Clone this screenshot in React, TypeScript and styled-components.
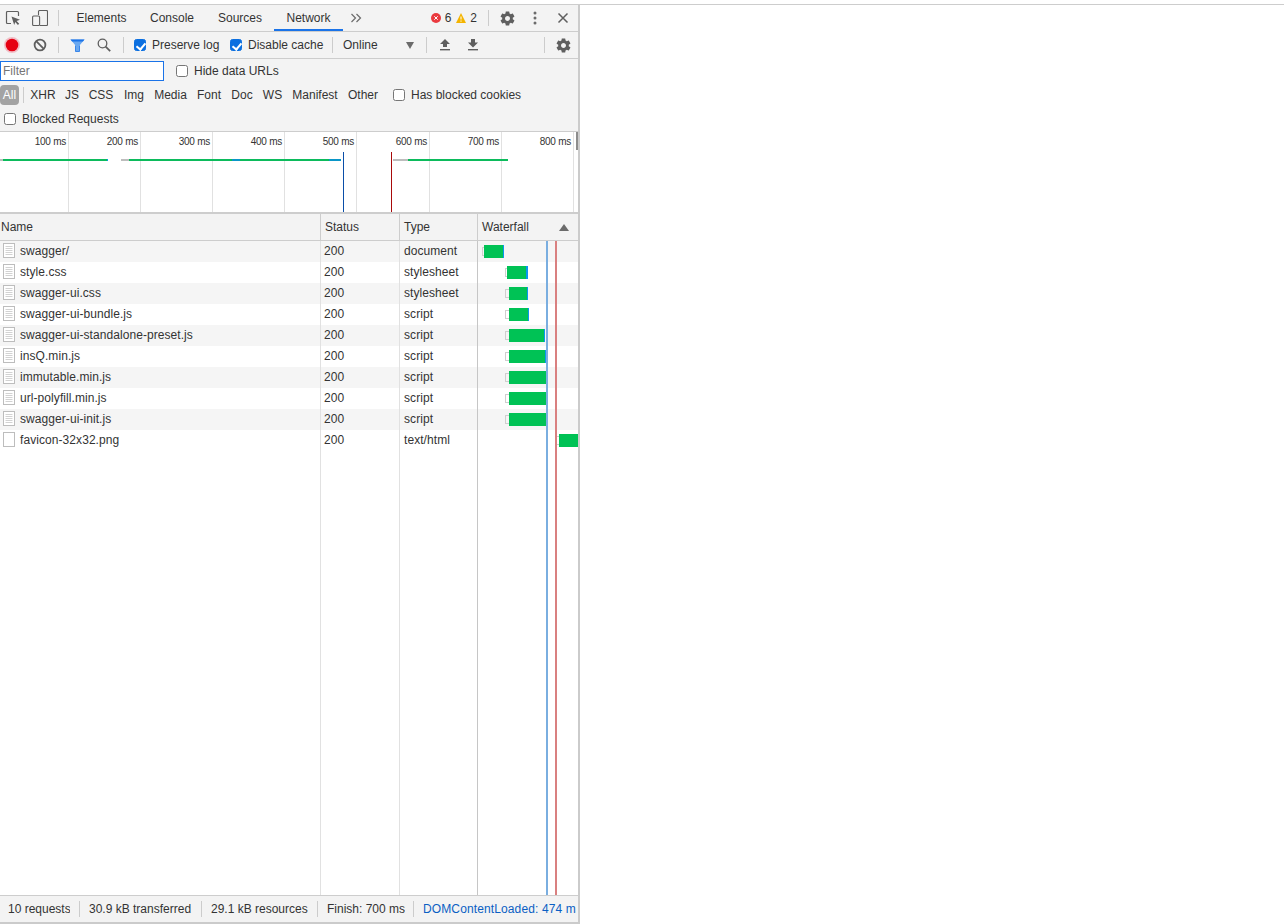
import React from 'react';
import styled, { createGlobalStyle } from 'styled-components';

const GlobalStyle = createGlobalStyle`
  html, body {
    margin: 0;
    padding: 0;
    background: #fff;
  }
  * {
    box-sizing: border-box;
  }
`;

const TopGap = styled.div`
  height: 5px;
  border-bottom: 1px solid #cdcdcd;
`;

const Panel = styled.div`
  width: 580px;
  height: 919px;
  display: flex;
  flex-direction: column;
  border-right: 2px solid #cbcbcb;
  font: 12px 'Liberation Sans', Arial, sans-serif;
  color: #333;
  overflow: hidden;
`;

const Bar = styled.div`
  height: 27px;
  flex: none;
  display: flex;
  align-items: center;
  background: #f3f3f3;
  border-bottom: 1px solid #cdcdcd;
`;

const Slot = styled.div<{ $w: number; $ml?: number }>`
  width: ${(p) => p.$w}px;
  margin-left: ${(p) => p.$ml ?? 0}px;
  height: 100%;
  flex: none;
  display: flex;
  align-items: center;
  justify-content: center;
`;

const Sep = styled.div<{ $ml: number; $mr: number }>`
  width: 1px;
  height: 16px;
  flex: none;
  background: #ccc;
  margin-left: ${(p) => p.$ml}px;
  margin-right: ${(p) => p.$mr}px;
`;

const Tab = styled.div<{ $w: number; $active?: boolean }>`
  width: ${(p) => p.$w}px;
  height: 100%;
  flex: none;
  display: flex;
  align-items: center;
  justify-content: center;
  color: #333;
  border-bottom: 2px solid ${(p) => (p.$active ? '#1a73e8' : 'transparent')};
  padding-top: 2px;
`;

const Counter = styled.div`
  margin-left: auto;
  display: flex;
  align-items: center;
  gap: 4px;
`;

const Count = styled.span<{ $mr?: number }>`
  margin-right: ${(p) => p.$mr ?? 0}px;
`;

const CheckLabel = styled.label<{ $w: number; $ml?: number }>`
  width: ${(p) => p.$w}px;
  margin-left: ${(p) => p.$ml ?? 0}px;
  flex: none;
  display: flex;
  align-items: center;
  gap: 6px;
  white-space: nowrap;
`;

const Check = styled.input.attrs({ type: 'checkbox' })`
  appearance: none;
  position: relative;
  width: 12px;
  height: 12px;
  margin: 0;
  flex: none;
  background: #fff;
  border: 1px solid #767676;
  border-radius: 2.5px;

  &:checked {
    background: #0b6fe0;
    border-color: #0b6fe0;
  }

  &:checked::after {
    content: '';
    position: absolute;
    left: 3px;
    top: 0.5px;
    width: 4px;
    height: 7px;
    border: solid #fff;
    border-width: 0 2px 2px 0;
    transform: rotate(40deg);
  }
`;

const ThrottleSelect = styled.div`
  width: 71px;
  margin-left: 10px;
  flex: none;
  display: flex;
  align-items: center;
  justify-content: space-between;
`;

const Caret = styled.span`
  width: 0;
  height: 0;
  border-left: 4px solid transparent;
  border-right: 4px solid transparent;
  border-top: 7px solid #6b6b6b;
`;

const FilterBlock = styled.div`
  height: 73px;
  flex: none;
  background: #f3f3f3;
  display: flex;
  flex-direction: column;
  border-bottom: 1px solid #cdcdcd;
`;

const FilterRow = styled.div`
  height: 24px;
  flex: none;
  display: flex;
  align-items: center;
`;

const FilterInput = styled.input`
  width: 164px;
  height: 20px;
  margin: 0 12px 0 0;
  padding: 0 2px;
  flex: none;
  border: 1px solid #1a73e8;
  outline: none;
  background: #fff;
  font: inherit;
  color: #333;

  &::placeholder {
    color: #757575;
  }
`;

const Chip = styled.span<{ $w: number }>`
  width: ${(p) => p.$w}px;
  flex: none;
  text-align: center;
  white-space: nowrap;
`;

const AllChip = styled.span`
  width: 19px;
  height: 20px;
  flex: none;
  border-radius: 4px;
  background: #a3a3a3;
  color: #fff;
  display: flex;
  align-items: center;
  justify-content: center;
`;

const Overview = styled.div`
  height: 80px;
  flex: none;
  position: relative;
  background: #fff;
  display: flex;
`;

const Tick = styled.div<{ $w: number }>`
  width: ${(p) => p.$w}px;
  flex: none;
  border-right: 1px solid #e1e1e1;
  padding: 3px 2px 0 0;
  text-align: right;
  font-size: 10px;
  letter-spacing: -0.25px;
  line-height: 13px;
  color: #333;
  white-space: nowrap;
`;

const OverviewChart = styled.svg`
  position: absolute;
  left: 0;
  top: 0;
`;

const ScrollHandle = styled.div`
  position: absolute;
  right: 0;
  top: 0;
  width: 2px;
  height: 18px;
  background: #8d8d8d;
`;

const Table = styled.div`
  flex: 1;
  min-height: 0;
  display: flex;
  flex-direction: column;
  border-top: 2px solid #cdcdcd;
`;

const columns = '321px 79px 78px 100px';

const HeaderRow = styled.div`
  height: 27px;
  flex: none;
  display: grid;
  grid-template-columns: ${columns};
  background: #f3f3f3;
  border-bottom: 1px solid #cdcdcd;
`;

const HeaderCell = styled.div<{ $pl: number }>`
  display: flex;
  align-items: center;
  padding-left: ${(p) => p.$pl}px;
  border-right: 1px solid #cdcdcd;

  &:last-child {
    border-right: 0;
    justify-content: space-between;
    padding-right: 9px;
  }
`;

const SortArrow = styled.span`
  width: 0;
  height: 0;
  border-left: 5px solid transparent;
  border-right: 5px solid transparent;
  border-bottom: 7px solid #6b6b6b;
`;

const Body = styled.div`
  flex: 1;
  min-height: 0;
  position: relative;
  display: flex;
  flex-direction: column;
`;

const Row = styled.div<{ $striped: boolean }>`
  height: 21px;
  flex: none;
  display: grid;
  grid-template-columns: ${columns};
  background: ${(p) => (p.$striped ? '#f5f5f5' : '#fff')};
`;

const Filler = styled.div`
  flex: 1;
  display: grid;
  grid-template-columns: ${columns};
`;

const Cell = styled.div<{ $pl?: number; $wf?: boolean }>`
  display: flex;
  align-items: center;
  gap: 5px;
  padding-left: ${(p) => p.$pl ?? 0}px;
  border-right: 1px solid ${(p) => (p.$wf ? '#c6c6c6' : '#e1e1e1')};
  white-space: nowrap;
  overflow: hidden;

  &:last-child {
    border-right: 0;
  }
`;

const TextCell = styled(Cell)`
  padding-bottom: 2px;
  letter-spacing: 0.07px;
`;

const Marker = styled.div<{ $x: number; $color: string }>`
  position: absolute;
  top: 0;
  bottom: 0;
  left: ${(p) => p.$x}px;
  width: 2px;
  background: ${(p) => p.$color};
`;

const Footer = styled.div`
  height: 29px;
  flex: none;
  display: flex;
  align-items: center;
  padding-left: 8px;
  background: #f3f3f3;
  border-top: 1px solid #cdcdcd;
  border-bottom: 2px solid #cbcbcb;
  white-space: nowrap;
  overflow: hidden;
`;

const FooterItem = styled.span<{ $w: number; $blue?: boolean }>`
  width: ${(p) => p.$w}px;
  flex: none;
  color: ${(p) => (p.$blue ? '#0a5fc4' : '#333')};
  letter-spacing: ${(p) => (p.$blue ? '0.12px' : 'normal')};
  overflow: hidden;
`;

const Gear = () => (
  <svg width="17" height="17" viewBox="0 0 24 24" fill="#5f5f5f">
    <path d="M19.43 12.98c.04-.32.07-.64.07-.98s-.03-.66-.07-.98l2.11-1.65c.19-.15.24-.42.12-.64l-2-3.46c-.12-.22-.39-.3-.61-.22l-2.49 1c-.52-.4-1.08-.73-1.69-.98l-.38-2.65C14.46 2.18 14.25 2 14 2h-4c-.25 0-.46.18-.49.42l-.38 2.65c-.61.25-1.17.59-1.69.98l-2.49-1c-.23-.09-.49 0-.61.22l-2 3.46c-.13.22-.07.49.12.64l2.11 1.65c-.04.32-.07.65-.07.98s.03.66.07.98l-2.11 1.65c-.19.15-.24.42-.12.64l2 3.46c.12.22.39.3.61.22l2.49-1c.52.4 1.08.73 1.69.98l.38 2.65c.03.24.24.42.49.42h4c.25 0 .46-.18.49-.42l.38-2.65c.61-.25 1.17-.59 1.69-.98l2.49 1c.23.09.49 0 .61-.22l2-3.46c.12-.22.07-.49-.12-.64l-2.11-1.65zM12 15.5c-1.93 0-3.5-1.57-3.5-3.5s1.57-3.5 3.5-3.5 3.5 1.57 3.5 3.5-1.57 3.5-3.5 3.5z" />
  </svg>
);

const Inspect = () => (
  <svg width="16" height="16" viewBox="0 0 16 16" fill="none">
    <path d="M6 13.5H2.5a1 1 0 0 1-1-1v-10a1 1 0 0 1 1-1h10a1 1 0 0 1 1 1V6" stroke="#5f5f5f" strokeWidth="1.2" />
    <path d="M6.5 6.5l8.5 3.2-3.4 1.2 2.6 2.8-1.3 1.2-2.6-2.8L9.2 15z" fill="#5f5f5f" />
  </svg>
);

const Device = () => (
  <svg width="16" height="16" viewBox="0 0 16 16" fill="none" stroke="#5f5f5f" strokeWidth="1.1">
    <path d="M6.5 5V1.5a1 1 0 0 1 1-1h7a1 1 0 0 1 1 1v13a1 1 0 0 1-1 1H8" />
    <rect x="0.6" y="6" width="7" height="9.5" rx="1" />
  </svg>
);

const Chevrons = () => (
  <svg width="12" height="12" viewBox="0 0 12 12" fill="none" stroke="#6b6b6b" strokeWidth="1.2">
    <path d="M1.5 2l4 4-4 4M6.5 2l4 4-4 4" />
  </svg>
);

const ErrorBadge = () => (
  <svg width="10" height="10" viewBox="0 0 10 10">
    <circle cx="5" cy="5" r="5" fill="#ea3a3f" />
    <path d="M3.3 3.3l3.4 3.4M6.7 3.3L3.3 6.7" stroke="#fff" strokeWidth="1" />
  </svg>
);

const WarnBadge = () => (
  <svg width="10" height="10" viewBox="0 0 10 10">
    <path d="M5 0l5 10H0z" fill="#f4b400" />
    <path d="M5 3.5v3M5 7.5v1.2" stroke="#fff" strokeWidth="1" />
  </svg>
);

const Kebab = () => (
  <svg width="4" height="14" viewBox="0 0 4 14" fill="#6b6b6b">
    <circle cx="2" cy="2" r="1.5" />
    <circle cx="2" cy="7" r="1.5" />
    <circle cx="2" cy="12" r="1.5" />
  </svg>
);

const Close = () => (
  <svg width="12" height="12" viewBox="0 0 12 12" stroke="#5f5f5f" strokeWidth="1.5">
    <path d="M1.5 1.5l9 9M10.5 1.5l-9 9" />
  </svg>
);

const Record = () => (
  <svg width="18" height="18" viewBox="0 0 18 18">
    <circle cx="9" cy="9" r="8" fill="#e8002b" opacity="0.22" />
    <circle cx="9" cy="9" r="6.3" fill="#e60012" />
  </svg>
);

const Clear = () => (
  <svg width="14" height="14" viewBox="0 0 14 14" fill="none" stroke="#5f5f5f" strokeWidth="1.8">
    <circle cx="7" cy="7" r="5.4" />
    <path d="M3.2 3.2l7.6 7.6" />
  </svg>
);

const Funnel = () => (
  <svg width="15" height="13" viewBox="0 0 15 13">
    <path d="M0.5 0.5h14L9.5 6.5V12.5H5.5V6.5z" fill="#6aa8f0" />
    <path d="M0.5 0.5h14l-1.6 2H2.1z" fill="#1a73e8" />
    <path d="M5.5 6.5V12.5H9.5V6.5" fill="none" stroke="#1a73e8" strokeWidth="0.8" />
  </svg>
);

const Search = () => (
  <svg width="14" height="14" viewBox="0 0 14 14" fill="none" stroke="#5f5f5f">
    <circle cx="5.5" cy="5.5" r="4.3" strokeWidth="1.3" />
    <path d="M8.6 8.6l4.6 4.6" strokeWidth="1.7" />
  </svg>
);

const Upload = () => (
  <svg width="10" height="12" viewBox="0 0 10 12" fill="#5f5f5f">
    <path d="M5 0l5 5H7v3H3V5H0z" />
    <rect y="10" width="10" height="1.4" />
  </svg>
);

const Download = () => (
  <svg width="10" height="12" viewBox="0 0 10 12" fill="#5f5f5f">
    <path d="M3 0h4v3.5h3l-5 5-5-5h3z" />
    <rect y="10" width="10" height="1.4" />
  </svg>
);

const FileIcon = ({ lines }: { lines: boolean }) => (
  <svg width="12" height="15" viewBox="0 0 12 15" style={{ flex: 'none' }}>
    <rect x="0.5" y="0.5" width="11" height="14" fill="#fff" stroke="#bdbdbd" />
    {lines && <path d="M2.5 3.5h7M2.5 5.5h7M2.5 7.5h7M2.5 9.5h7M2.5 11.5h7" stroke="#d2d2d2" />}
  </svg>
);

type Req = {
  name: string;
  type: string;
  wait: number;
  start: number;
  end: number;
  blue: number;
  plain?: boolean;
};

// x positions are relative to the waterfall column (478px)
const requests: Req[] = [
  { name: 'swagger/', type: 'document', wait: 4.5, start: 6, end: 25, blue: 1 },
  { name: 'style.css', type: 'stylesheet', wait: 27.5, start: 29, end: 48, blue: 2 },
  { name: 'swagger-ui.css', type: 'stylesheet', wait: 27.5, start: 31, end: 49, blue: 1 },
  { name: 'swagger-ui-bundle.js', type: 'script', wait: 27.5, start: 31, end: 50, blue: 1 },
  { name: 'swagger-ui-standalone-preset.js', type: 'script', wait: 27.5, start: 31, end: 66, blue: 1 },
  { name: 'insQ.min.js', type: 'script', wait: 27.5, start: 31, end: 67, blue: 1 },
  { name: 'immutable.min.js', type: 'script', wait: 27.5, start: 31, end: 68, blue: 1 },
  { name: 'url-polyfill.min.js', type: 'script', wait: 27.5, start: 31, end: 68, blue: 1 },
  { name: 'swagger-ui-init.js', type: 'script', wait: 27.5, start: 31, end: 68, blue: 1 },
  { name: 'favicon-32x32.png', type: 'text/html', wait: 77.5, start: 81, end: 100, blue: 0, plain: true },
];

const ticks = [
  ['100 ms', 69],
  ['200 ms', 72],
  ['300 ms', 72],
  ['400 ms', 72],
  ['500 ms', 72],
  ['600 ms', 73],
  ['700 ms', 72],
  ['800 ms', 72],
] as const;

const WaterfallBar = ({ r }: { r: Req }) => (
  <svg width="100" height="21" viewBox="0 0 100 21">
    <rect x={r.wait} y="6.5" width={r.start - r.wait + 2} height="8" fill="none" stroke="#cfcfcf" />
    <rect x={r.start} y="4" width={r.end - r.start} height="13" fill="#00c255" />
    <rect x={r.end} y="4" width={r.blue} height="13" fill="#0a96f0" />
  </svg>
);

export default function App() {
  return (
    <>
      <GlobalStyle />
      <TopGap />
      <Panel>
        <Bar>
          <Slot $w={26}><Inspect /></Slot>
          <Slot $w={27}><Device /></Slot>
          <Sep $ml={5} $mr={6} />
          <Tab $w={73}>Elements</Tab>
          <Tab $w={68}>Console</Tab>
          <Tab $w={68}>Sources</Tab>
          <Tab $w={69} $active>Network</Tab>
          <Slot $w={26}><Chevrons /></Slot>
          <Counter>
            <ErrorBadge />
            <Count $mr={1}>6</Count>
            <WarnBadge />
            <Count>2</Count>
          </Counter>
          <Sep $ml={11} $mr={5} />
          <Slot $w={26}><Gear /></Slot>
          <Slot $w={26} $ml={2}><Kebab /></Slot>
          <Slot $w={26} $ml={2}><Close /></Slot>
          <Slot $w={2} />
        </Bar>

        <Bar>
          <Slot $w={24}><Record /></Slot>
          <Slot $w={24} $ml={4}><Clear /></Slot>
          <Sep $ml={6} $mr={6} />
          <Slot $w={24}><Funnel /></Slot>
          <Slot $w={24} $ml={3}><Search /></Slot>
          <Sep $ml={7} $mr={10} />
          <CheckLabel $w={96}><Check defaultChecked />Preserve log</CheckLabel>
          <CheckLabel $w={102}><Check defaultChecked />Disable cache</CheckLabel>
          <Sep $ml={0} $mr={0} />
          <ThrottleSelect>Online<Caret /></ThrottleSelect>
          <Sep $ml={12} $mr={6} />
          <Slot $w={24}><Upload /></Slot>
          <Slot $w={24} $ml={4}><Download /></Slot>
          <Sep $ml={59} $mr={5} />
          <Slot $w={26}><Gear /></Slot>
        </Bar>

        <FilterBlock>
          <FilterRow>
            <FilterInput placeholder="Filter" readOnly />
            <CheckLabel $w={120}><Check />Hide data URLs</CheckLabel>
          </FilterRow>
          <FilterRow>
            <AllChip>All</AllChip>
            <Sep $ml={4} $mr={2} />
            <Chip $w={34}>XHR</Chip>
            <Chip $w={24}>JS</Chip>
            <Chip $w={34}>CSS</Chip>
            <Chip $w={32}>Img</Chip>
            <Chip $w={41}>Media</Chip>
            <Chip $w={36}>Font</Chip>
            <Chip $w={30}>Doc</Chip>
            <Chip $w={31}>WS</Chip>
            <Chip $w={54}>Manifest</Chip>
            <Chip $w={42}>Other</Chip>
            <CheckLabel $w={135} $ml={9}><Check />Has blocked cookies</CheckLabel>
          </FilterRow>
          <FilterRow>
            <CheckLabel $w={130} $ml={4}><Check />Blocked Requests</CheckLabel>
          </FilterRow>
        </FilterBlock>

        <Overview>
          {ticks.map(([label, w]) => (
            <Tick key={label} $w={w}>{label}</Tick>
          ))}
          <OverviewChart width="578" height="80" viewBox="0 0 578 80">
            <rect x="0" y="27" width="3" height="2" fill="#bdbdbd" />
            <rect x="3" y="27" width="104" height="2" fill="#0cbb5c" />
            <rect x="107" y="27" width="1" height="2" fill="#0a96f0" />
            <rect x="121" y="27" width="8" height="2" fill="#bdbdbd" />
            <rect x="129" y="27" width="200" height="2" fill="#0cbb5c" />
            <rect x="232" y="27" width="8" height="2" fill="#0a96c8" />
            <rect x="329" y="27" width="12" height="2" fill="#0a96c8" />
            <rect x="393" y="27" width="15" height="2" fill="#bdbdbd" />
            <rect x="408" y="27" width="100" height="2" fill="#0cbb5c" />
            <rect x="343" y="20" width="1" height="60" fill="#0a4ea8" />
            <rect x="391" y="20" width="1" height="60" fill="#a80a0a" />
          </OverviewChart>
          <ScrollHandle />
        </Overview>

        <Table>
          <HeaderRow>
            <HeaderCell $pl={1}>Name</HeaderCell>
            <HeaderCell $pl={4}>Status</HeaderCell>
            <HeaderCell $pl={4}>Type</HeaderCell>
            <HeaderCell $pl={4}>Waterfall<SortArrow /></HeaderCell>
          </HeaderRow>
          <Body>
            {requests.map((r, i) => (
              <Row key={r.name} $striped={i % 2 === 0}>
                <TextCell $pl={3}><FileIcon lines={!r.plain} />{r.name}</TextCell>
                <TextCell $pl={3}>200</TextCell>
                <TextCell $pl={4} $wf>{r.type}</TextCell>
                <Cell><WaterfallBar r={r} /></Cell>
              </Row>
            ))}
            <Filler>
              <Cell />
              <Cell />
              <Cell $wf />
              <Cell />
            </Filler>
            <Marker $x={546} $color="#7aaee0" />
            <Marker $x={555} $color="#d98080" />
          </Body>
        </Table>

        <Footer>
          <FooterItem $w={62}>10 requests</FooterItem>
          <Sep $ml={9} $mr={9} />
          <FooterItem $w={103}>30.9 kB transferred</FooterItem>
          <Sep $ml={9} $mr={9} />
          <FooterItem $w={97}>29.1 kB resources</FooterItem>
          <Sep $ml={9} $mr={9} />
          <FooterItem $w={78}>Finish: 700 ms</FooterItem>
          <Sep $ml={8} $mr={9} />
          <FooterItem $w={153} $blue>DOMContentLoaded: 474 ms</FooterItem>
        </Footer>
      </Panel>
    </>
  );
}
